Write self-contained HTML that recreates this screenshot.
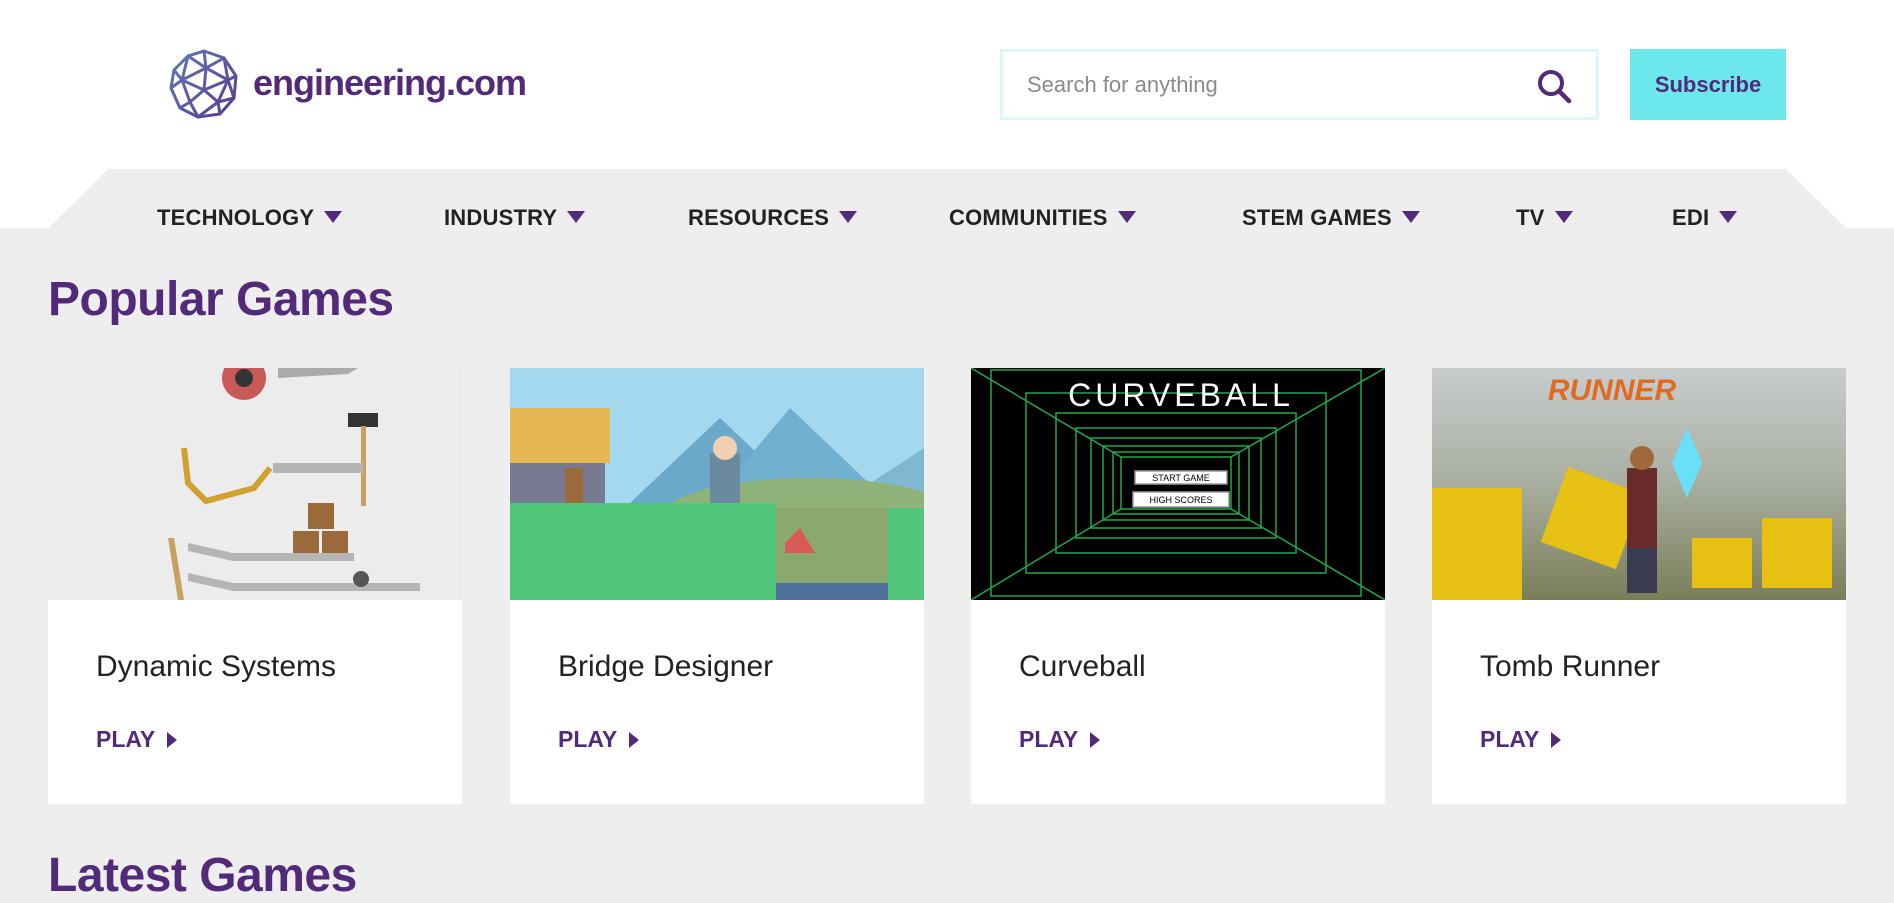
<!DOCTYPE html>
<html><head><meta charset="utf-8"><style>
*{margin:0;padding:0;box-sizing:border-box}
body{width:1894px;height:892px;overflow:hidden;background:#eeeeee;font-family:"Liberation Sans",sans-serif;position:relative}
.top{position:absolute;left:0;top:0;width:1894px;height:228px;background:#fff}
.navbg{position:absolute;left:0;top:169px;width:1894px;height:60px}
.logo{position:absolute;left:253px;top:62px;font-size:36px;font-weight:bold;color:#532a7a;letter-spacing:-1px}
.search{position:absolute;left:1000px;top:49px;width:599px;height:71px;border:3px solid #dcf7f8;background:#fff}
.search span{position:absolute;left:24px;top:20px;font-size:22px;color:#8a8a8a}
.sub{position:absolute;left:1630px;top:49px;width:156px;height:71px;background:#6ce8ec;color:#532a7a;font-weight:bold;font-size:22px;text-align:center;line-height:71px}
.nav{position:absolute;top:205px;font-size:22px;font-weight:bold;color:#222;letter-spacing:0.2px}
.nav i{display:inline-block;width:0;height:0;border-left:9px solid transparent;border-right:9px solid transparent;border-top:12px solid #532a7a;margin-left:10px;vertical-align:2px}
h2{position:absolute;left:48px;font-size:48px;font-weight:bold;color:#532a7a;letter-spacing:-0.5px}
.card{position:absolute;top:368px;width:414px;height:436px;background:#fff}
.img{position:absolute;left:0;top:0;width:414px;height:232px;overflow:hidden}
.t{position:absolute;left:48px;top:282px;font-size:30px;color:#222}
.p{position:absolute;left:48px;top:358px;font-size:23px;font-weight:bold;color:#532a7a}
.p i{display:inline-block;width:0;height:0;border-top:8px solid transparent;border-bottom:8px solid transparent;border-left:10px solid #532a7a;margin-left:12px;vertical-align:-1px}
</style></head><body>
<div class="top"></div>
<svg class="navbg" viewBox="0 0 1894 60"><polygon points="108,0 1786,0 1846,59 1894,59 1894,60 0,60 0,59 48,59" fill="#eeeeee"/></svg>
<svg style="position:absolute;left:168px;top:48px" width="72" height="72" viewBox="0 0 72 72">
<defs><linearGradient id="g" x1="0" y1="0" x2="1" y2="1"><stop offset="0" stop-color="#5d7bb5"/><stop offset="1" stop-color="#5a3a8c"/></linearGradient></defs>
<g fill="none" stroke="url(#g)" stroke-width="3" stroke-linejoin="round">
<polygon points="36,3 56,10 68,28 66,50 52,66 30,69 12,60 3,40 6,22 20,8"/>
<path d="M20,8 L36,3 L38,20 L20,8 L14,32 L38,20 L56,10 L60,32 L38,20 L36,42 L14,32 L6,22 M14,32 L3,40 M14,32 L22,54 L36,42 L60,32 L68,28 M60,32 L66,50 L50,54 L36,42 M22,54 L12,60 M22,54 L30,69 L50,54 L52,66 M50,54 L60,32"/>
</g></svg>
<div class="logo">engineering.com</div>
<div class="search"><span>Search for anything</span>
<svg style="position:absolute;right:24px;top:16px" width="36" height="36" viewBox="0 0 36 36"><circle cx="15" cy="15" r="11" fill="none" stroke="#532a7a" stroke-width="4"/><line x1="23" y1="23" x2="33" y2="33" stroke="#532a7a" stroke-width="4.5" stroke-linecap="round"/></svg></div>
<div class="sub">Subscribe</div>
<div class="nav" style="left:157px">TECHNOLOGY<i></i></div>
<div class="nav" style="left:444px">INDUSTRY<i></i></div>
<div class="nav" style="left:688px">RESOURCES<i></i></div>
<div class="nav" style="left:949px">COMMUNITIES<i></i></div>
<div class="nav" style="left:1242px">STEM GAMES<i></i></div>
<div class="nav" style="left:1516px">TV<i></i></div>
<div class="nav" style="left:1672px">EDI<i></i></div>
<h2 style="top:272px">Popular Games</h2>

<div class="card" style="left:48px"><div class="img" style="background:#ececec">
<svg width="414" height="232" viewBox="0 0 414 232">
<circle cx="196" cy="10" r="22" fill="#c95a5a"/><circle cx="196" cy="10" r="9" fill="#333"/>
<polygon points="230,0 310,0 300,6 230,10" fill="#aaa"/>
<rect x="300" y="45" width="30" height="14" fill="#333"/><rect x="313" y="58" width="5" height="80" fill="#c8a060"/>
<path d="M136,80 L140,115 L158,133 L206,120 L222,100" fill="none" stroke="#d0a030" stroke-width="6"/>
<rect x="225" y="95" width="90" height="10" fill="#b5b5b5"/>
<rect x="260" y="135" width="26" height="26" fill="#9a6a3a"/><rect x="245" y="163" width="26" height="26" fill="#9a6a3a"/><rect x="274" y="163" width="26" height="26" fill="#9a6a3a"/>
<polygon points="140,175 185,185 306,185 306,193 185,193 140,183" fill="#b5b5b5"/>
<polygon points="140,205 185,215 372,215 372,223 185,223 140,213" fill="#b5b5b5"/>
<circle cx="313" cy="211" r="8" fill="#555"/>
<polygon points="120,170 126,170 136,232 130,232" fill="#c8a060"/>
</svg></div><div class="t">Dynamic Systems</div><div class="p">PLAY<i></i></div></div>

<div class="card" style="left:510px"><div class="img" style="background:#a4d8ef">
<svg width="414" height="232" viewBox="0 0 414 232">
<polygon points="120,135 210,50 300,135" fill="#6aa9c9"/><polygon points="200,135 280,40 380,135" fill="#72b0cf"/><polygon points="330,135 414,80 414,135" fill="#80b8d2"/>
<ellipse cx="300" cy="150" rx="150" ry="40" fill="#8fb27a"/>
<rect x="0" y="40" width="100" height="55" fill="#e6b854"/><rect x="0" y="95" width="95" height="40" fill="#777a90"/><rect x="55" y="100" width="18" height="35" fill="#9a6a3a"/>
<rect x="200" y="85" width="30" height="50" fill="#6a8aa0"/><circle cx="215" cy="80" r="12" fill="#f0d0b0"/>
<rect x="0" y="135" width="266" height="97" fill="#52c67a"/><rect x="266" y="140" width="112" height="92" fill="#8aa870"/><rect x="266" y="215" width="112" height="17" fill="#4e6f98"/><rect x="378" y="140" width="36" height="92" fill="#52c67a"/>
<polygon points="275,175 290,160 305,185 275,185" fill="#d95a5a"/>
</svg></div><div class="t">Bridge Designer</div><div class="p">PLAY<i></i></div></div>

<div class="card" style="left:971px"><div class="img" style="background:#000">
<svg width="414" height="232" viewBox="0 0 414 232" fill="none" stroke="#1fa84a" stroke-width="1.5">
<rect x="20" y="2" width="370" height="226"/><rect x="55" y="25" width="300" height="180"/><rect x="85" y="45" width="240" height="140"/><rect x="105" y="60" width="200" height="110"/><rect x="120" y="70" width="170" height="90"/><rect x="132" y="78" width="146" height="74"/><rect x="142" y="84" width="126" height="62"/><rect x="150" y="89" width="110" height="52"/>
<path d="M0,0 L150,89 M414,0 L260,89 M0,232 L150,141 M414,232 L260,141"/>
<text x="210" y="38" fill="#fff" stroke="none" font-family="Liberation Sans,sans-serif" font-size="32" text-anchor="middle" letter-spacing="4">CURVEBALL</text>
<rect x="164" y="103" width="92" height="13" fill="#fff" stroke="#999"/><text x="210" y="113" fill="#000" stroke="none" font-size="9" text-anchor="middle">START GAME</text>
<rect x="162" y="124" width="96" height="15" fill="#fff" stroke="#999"/><text x="210" y="135" fill="#000" stroke="none" font-size="9" text-anchor="middle">HIGH SCORES</text>
</svg></div><div class="t">Curveball</div><div class="p">PLAY<i></i></div></div>

<div class="card" style="left:1432px"><div class="img" style="background:linear-gradient(#c8ccce,#a8aea0 50%,#7a7e58)">
<svg width="414" height="232" viewBox="0 0 414 232">
<text x="180" y="32" fill="#e06a20" font-size="30" font-weight="bold" font-style="italic" text-anchor="middle">RUNNER</text>
<rect x="0" y="120" width="90" height="112" fill="#e6c012"/><rect x="120" y="110" width="80" height="80" fill="#e6c012" transform="rotate(20 160 150)"/>
<rect x="195" y="100" width="30" height="80" fill="#6a2a2a"/><rect x="195" y="180" width="30" height="45" fill="#3a3a50"/><circle cx="210" cy="90" r="12" fill="#a06a3a"/>
<polygon points="255,60 270,95 255,130 240,95" fill="#6ae0f8"/>
<rect x="330" y="150" width="70" height="70" fill="#e6c012"/><rect x="260" y="170" width="60" height="50" fill="#e6c012"/>
</svg></div><div class="t">Tomb Runner</div><div class="p">PLAY<i></i></div></div>

<h2 style="top:848px">Latest Games</h2>
</body></html>
